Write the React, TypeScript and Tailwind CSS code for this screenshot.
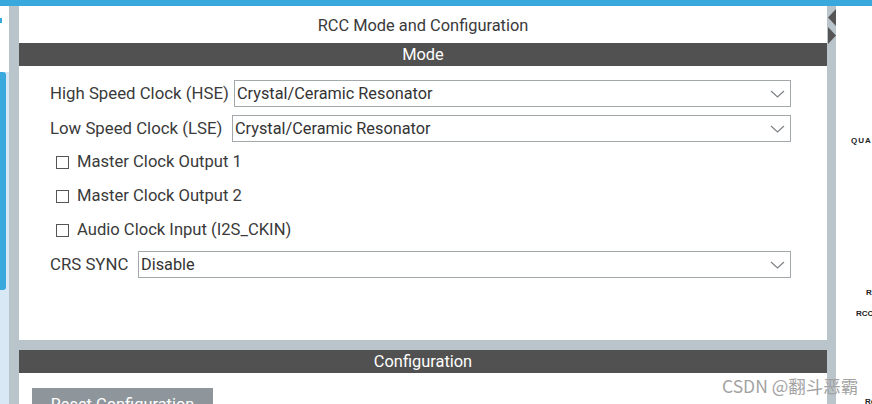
function Chevron() {
  return (
    <svg width="15" height="8" viewBox="0 0 15 8" className="shrink-0">
      <path d="M1 1 L7.5 7 L14 1" fill="none" stroke="#7d8286" strokeWidth="1.2" />
    </svg>
  );
}

function Select({ value }: { value: string }) {
  return (
    <div className="flex-1 h-[27px] border border-[#a3a8ab] bg-white flex items-center pl-[2px] pr-[5px]">
      <span className="flex-1 text-[16.3px] text-[#333] pt-[2px]">{value}</span>
      <Chevron />
    </div>
  );
}

function Check({ label }: { label: string }) {
  return (
    <div className="h-[34px] flex items-center pl-[37px] gap-[8px]">
      <div className="w-[13px] h-[13px] border border-[#555] bg-white" />
      <span className="text-[16.6px] text-[#3a3a3a] pt-[1px]">{label}</span>
    </div>
  );
}

export default function App() {
  return (
    <div className="w-[872px] h-[404px] overflow-hidden relative bg-white flex flex-col" style={{ fontFamily: 'Roboto, "Noto Sans", sans-serif' }}>
      <div className="h-[6px] bg-[#39a8dc] shrink-0" />
      <div className="flex flex-1 min-h-0">
        {/* left edge */}
        <div className="w-[9px] flex flex-col">
          <div className="h-[66px] bg-white relative">
            <div className="absolute left-0 top-[12px] w-[2px] h-[5px] bg-[#39a8dc]" />
          </div>
          <div className="flex-1 bg-[#d9e8f5]">
            <div className="w-[6px] h-[218px] bg-[#39a8dc] rounded-r-[3px]" />
          </div>
        </div>

        {/* grey frame */}
        <div className="w-[10px] bg-[#b9c4cb]" />
        <div className="w-[808px] flex flex-col bg-[#b9c4cb]">
          <div className="h-[334px] bg-white flex flex-col shrink-0">
            <div className="h-[37px] flex items-center justify-center text-[16.4px] text-[#3a3a3a] pt-[3px]">RCC Mode and Configuration</div>
            <div className="h-[23px] bg-[#505150] flex items-center justify-center text-[16.4px] text-white pt-[2px]">Mode</div>
            <div className="pt-[14px] pr-[36px] flex flex-col">
              <div className="flex items-center h-[27px] pl-[31px]">
                <span className="w-[184px] text-[16.8px] text-[#3a3a3a] pt-[1px]">High Speed Clock (HSE)</span>
                <Select value="Crystal/Ceramic Resonator" />
              </div>
              <div className="flex items-center h-[27px] pl-[31px] mt-[8px]">
                <span className="w-[182px] text-[16.8px] text-[#3a3a3a] pt-[1px]">Low Speed Clock (LSE)</span>
                <Select value="Crystal/Ceramic Resonator" />
              </div>
              <div className="mt-[3px]">
                <Check label="Master Clock Output 1" />
                <Check label="Master Clock Output 2" />
                <Check label="Audio Clock Input (I2S_CKIN)" />
              </div>
              <div className="flex items-center h-[27px] pl-[31px] mt-[4px]">
                <span className="w-[88px] text-[16.8px] text-[#3a3a3a] pt-[1px]">CRS SYNC</span>
                <Select value="Disable" />
              </div>
            </div>
          </div>
          <div className="h-[10px] shrink-0" />
          <div className="flex-1 bg-white flex flex-col">
            <div className="h-[23px] bg-[#505150] flex items-center justify-center text-[16.4px] text-white shrink-0 pt-[2px]">Configuration</div>
            <div className="pt-[15px] pl-[13px]">
              <div className="w-[181px] h-[32px] bg-[#8e969b] flex items-center justify-center text-[16.4px] text-white pt-[2px]">Reset Configuration</div>
            </div>
          </div>
        </div>
        <div className="w-[9px] bg-[#b9c4cb] flex flex-col items-end pt-[3px]">
          <svg width="8" height="17" viewBox="0 0 8 17"><path d="M8 0 L0 8.5 L8 17 Z" fill="#555" /></svg>
          <svg width="8" height="17" viewBox="0 0 8 17" className="mt-[1px]"><path d="M0 0 L8 8.5 L0 17 Z" fill="#555" /></svg>
        </div>

        {/* diagram fragment on the right */}
        <div className="flex-1 relative bg-white text-[8px] font-bold text-[#222]" style={{ fontFamily: '"Liberation Sans", Arial, sans-serif' }}>
          <span className="absolute left-[15px] top-[129px] tracking-[1px]">QUA</span>
          <span className="absolute left-[30px] top-[281px]">R</span>
          <span className="absolute left-[20px] top-[302px]">RCC</span>
          <span className="absolute left-[29px] top-[390px]">Rc</span>
        </div>
      </div>

      {/* watermark */}
      <div className="absolute left-[722px] top-[373px] text-[17.5px] text-[#a3a3a3]" style={{ fontFamily: '"Noto Sans CJK SC", "Noto Sans", sans-serif' }}>
        CSDN @翻斗恶霸
      </div>
    </div>
  );
}
